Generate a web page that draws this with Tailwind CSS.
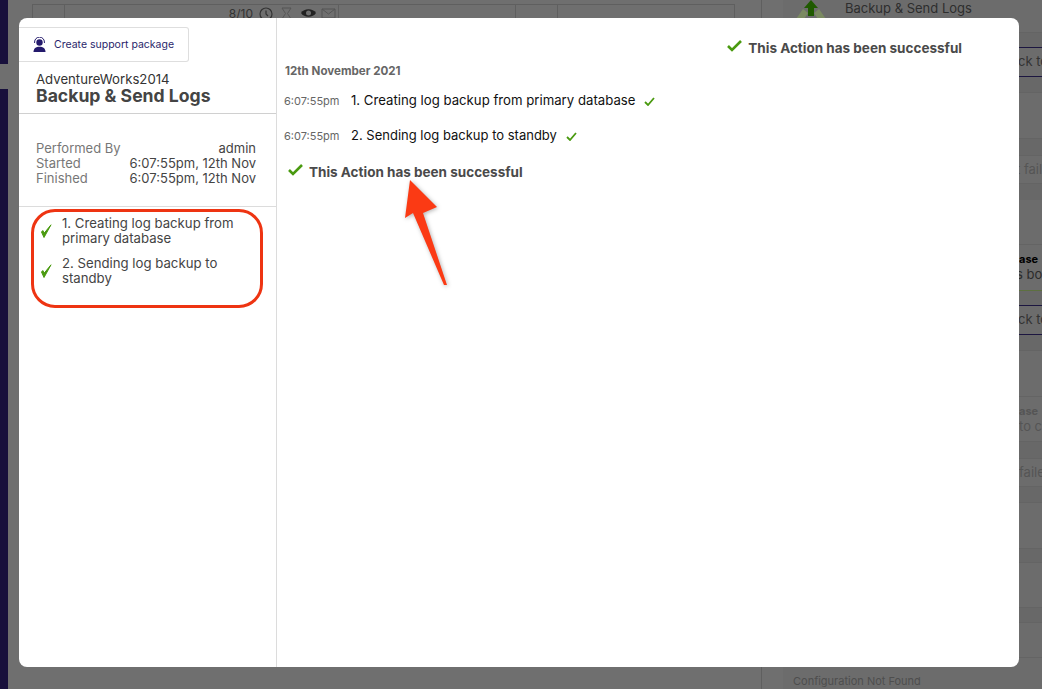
<!DOCTYPE html>
<html>
<head>
<meta charset="utf-8">
<script src="https://cdn.jsdelivr.net/npm/@tailwindcss/browser@4"></script>
</head>
<body class="m-0">
<div class="relative w-[1042px] h-[689px] overflow-hidden bg-[#6f6f6f] font-['Inter','Noto_Sans',sans-serif]">

  <!-- dimmed page behind the dialog -->
  <div class="absolute inset-0 flex">
    <div class="w-2 h-full flex flex-col shrink-0">
      <div class="h-[64px] bg-[#18103c]"></div>
      <div class="h-[25px] bg-[#6f6f6f]"></div>
      <div class="flex-1 bg-[#18103c]"></div>
    </div>
    <div class="w-[24px] shrink-0"></div>
    <div class="w-[703px] h-[18px] shrink-0 mt-[4px] border border-b-0 border-[#5f5f5f] flex text-[#333] text-[12px]">
      <div class="w-[32px] border-r border-[#5f5f5f]"></div>
      <div class="w-[274px] border-r border-[#5f5f5f] flex justify-end items-start gap-[6px] pr-[2px] pt-[2px]">
        <span class="leading-[14px]">8/10</span>
        <svg class="w-[14px] h-[14px]" viewBox="0 0 14 14" fill="none" stroke="#333" stroke-width="1.2"><circle cx="7" cy="7" r="6"/><path d="M7 3.5V7l2 2"/></svg>
        <svg class="w-[13px] h-[13px] ml-[1px]" viewBox="0 0 13 13" fill="none" stroke="#555" stroke-width="1"><path d="M2 1h9L7.5 6.5 11 12H2l3.5-5.5z"/></svg>
        <svg class="w-[17px] h-[12px] ml-[1px]" viewBox="0 0 17 12" fill="#222"><path d="M1 6c3-5 12-5 15 0-3 5-12 5-15 0z"/><circle cx="8.5" cy="6" r="2.5" fill="#6f6f6f"/></svg>
        <svg class="w-[15px] h-[12px] -ml-[2px]" viewBox="0 0 15 12" fill="none" stroke="#555" stroke-width="1"><path d="M1 2h13v9H1zM1 2l6.5 5L14 2"/></svg>
      </div>
      <div class="w-[177px] border-r border-[#5f5f5f]"></div>
      <div class="w-[42px] border-r border-[#5f5f5f]"></div>
    </div>
    <div class="w-[26px] shrink-0"></div>
    <div class="w-[22px] shrink-0 border-l border-[#5f5f5f]"></div>
    <div class="flex-1 flex flex-col bg-[#6c6c6c] text-[#333] text-[13px] overflow-hidden">
      <div class="h-[32px] flex items-start">
        <svg class="w-[32px] h-[22px] ml-[12px] shrink-0" viewBox="0 0 32 22"><path d="M1 19l7-10 5 4-4 6z M31 19l-7-10-5 4 4 6z" fill="#7b8a62"/><path d="M16 0l7 8h-4v8h-6V8H9z" fill="#1f5a00"/></svg>
        <span class="ml-[18px] text-[13px] leading-[17px] whitespace-nowrap text-[#2e2e2e]">Backup &amp; Send Logs</span>
      </div>
      <div class="h-[15px] bg-[#686868] border-t border-[#646464]"></div>
      <div class="h-[30px] border-y border-[#1c1640] flex items-center pl-[235px] whitespace-nowrap">ck to</div>
      <div class="h-[15px] bg-[#686868]"></div>
      <div class="h-[47px] border-y border-[#646464]"></div>
      <div class="h-[16px] bg-[#686868]"></div>
      <div class="h-[29px] border-y border-[#646464] flex items-center pl-[233px] text-[#555] whitespace-nowrap">t fail</div>
      <div class="h-[16px] bg-[#686868]"></div>
      <div class="h-[45px] border-b border-[#646464]"></div>
      <div class="h-[45px] flex flex-col pl-[236px] pt-[7px] leading-[15px] whitespace-nowrap"><b class="text-[11px] text-black">ase</b><span class="text-[#2b2b2b] -ml-[3px]">s bo</span></div>
      <div class="h-[15px] bg-[#686868] border-t border-[#5d7040]"></div>
      <div class="h-[30px] border-y border-[#1c1640] flex items-center pl-[235px] whitespace-nowrap">ck to</div>
      <div class="h-[15px] bg-[#686868]"></div>
      <div class="h-[47px] border-y border-[#646464]"></div>
      <div class="h-[44px] flex flex-col pl-[236px] pt-[7px] leading-[15px] text-[#555] whitespace-nowrap"><b class="text-[11px]">ase</b><span>to c</span></div>
      <div class="h-[17px] bg-[#686868] border-t border-[#646464]"></div>
      <div class="h-[29px] border-y border-[#646464] flex items-center pl-[236px] text-[#555] whitespace-nowrap">faile</div>
      <div class="h-[15px] bg-[#686868]"></div>
      <div class="h-[47px] border-y border-[#646464]"></div>
      <div class="h-[13px] bg-[#686868]"></div>
      <div class="h-[46px] border-y border-[#646464]"></div>
      <div class="h-[14px] bg-[#686868]"></div>
      <div class="h-[36px] border-y border-[#646464]"></div>
      <div class="flex-1 pl-[10px] pt-[16px] text-[11px] leading-[14px] text-[#4e4e4e] whitespace-nowrap">Configuration Not Found</div>
    </div>
  </div>

  <!-- dialog -->
  <div class="absolute left-[19px] top-[18px] w-[1000px] h-[649px] bg-white rounded-[8px] flex overflow-hidden">
    <aside class="w-[258px] shrink-0 h-full border-r border-[#dcdcdc] flex flex-col">
      <button class="mt-[9px] w-[170px] h-[35px] bg-white border border-l-0 border-[#dedede] rounded-r-[3px] flex items-center pl-[13px] gap-[7px] text-[#2a1f6b] text-[10.5px] whitespace-nowrap">
        <svg class="w-[15px] h-[15px] shrink-0" viewBox="0 0 15 15" fill="#241a6c"><circle cx="7.5" cy="5.5" r="3.2"/><path d="M2.6 6V5a4.9 4.9 0 0 1 9.8 0v1" fill="none" stroke="#241a6c" stroke-width="1"/><path d="M1.5 15c0-3.5 2.4-5.2 6-5.2s6 1.7 6 5.2z"/></svg>
        Create support package
      </button>
      <div class="h-[52px] border-b border-[#d0d0d0] pl-[17px] pt-[9px]">
        <div class="text-[13.2px] leading-[16px] text-[#333]">AdventureWorks2014</div>
        <div class="text-[17.6px] leading-[18px] font-bold text-[#444]">Backup &amp; Send Logs</div>
      </div>
      <dl class="h-[93px] border-b border-[#dcdcdc] pl-[17px] pr-[20px] pt-[27px] text-[13px] leading-[15px] text-[#777]">
        <div class="flex justify-between"><dt>Performed By</dt><dd class="text-[#444]">admin</dd></div>
        <div class="flex justify-between"><dt>Started</dt><dd class="text-[#444]">6:07:55pm, 12th Nov</dd></div>
        <div class="flex justify-between"><dt>Finished</dt><dd class="text-[#444]">6:07:55pm, 12th Nov</dd></div>
      </dl>
      <ol class="pt-[9px] pl-[21px] pr-[20px] text-[13.2px] leading-[15px] text-[#444] flex flex-col gap-[10px]">
        <li class="flex items-center gap-[10px]">
          <svg class="w-[12px] h-[14px] shrink-0" viewBox="0 0 12 14"><path d="M1.5 8l2.5 5.5L11 .8 4.3 9 2.8 6.5z" fill="#4a9a10" stroke="#4a9a10" stroke-width="1"/></svg>
          <span>1. Creating log backup from primary database</span>
        </li>
        <li class="flex items-center gap-[10px]">
          <svg class="w-[12px] h-[14px] shrink-0" viewBox="0 0 12 14"><path d="M1.5 8l2.5 5.5L11 .8 4.3 9 2.8 6.5z" fill="#4a9a10" stroke="#4a9a10" stroke-width="1"/></svg>
          <span>2. Sending log backup to standby</span>
        </li>
      </ol>
    </aside>
    <main class="flex-1 flex flex-col pl-[8px]">
      <div class="h-[30px] mt-[20px] flex items-start justify-end pr-[57px]">
        <div class="flex items-center gap-[6px] h-[20px]">
          <svg class="w-[15px] h-[13px] -mt-[5px]" viewBox="0 0 15 13" fill="none" stroke="#4a9a10" stroke-width="2.6"><path d="M1 7l4 4 9-9"/></svg>
          <span class="text-[13.5px] font-bold text-[#4a4a4a]">This Action has been successful</span>
        </div>
      </div>
      <div class="mt-[-4px] text-[11.6px] leading-[14px] font-bold text-[#666]">12th November 2021</div>
      <div class="mt-[13px] flex items-center h-[20px]">
        <span class="w-[67px] text-[11px] text-[#666] -ml-[1px] shrink-0">6:07:55pm</span>
        <span class="text-[13.2px] text-[#111]">1. Creating log backup from primary database</span>
        <svg class="w-[11px] h-[9px] ml-[9px]" viewBox="0 0 11 9" fill="none" stroke="#4a9a10" stroke-width="1.8"><path d="M1 5l3 3 6-7"/></svg>
      </div>
      <div class="mt-[15px] flex items-center h-[20px]">
        <span class="w-[67px] text-[11px] text-[#666] -ml-[1px] shrink-0">6:07:55pm</span>
        <span class="text-[13px] text-[#111]">2. Sending log backup to standby</span>
        <svg class="w-[11px] h-[9px] ml-[9px]" viewBox="0 0 11 9" fill="none" stroke="#4a9a10" stroke-width="1.8"><path d="M1 5l3 3 6-7"/></svg>
      </div>
      <div class="mt-[16px] flex items-center gap-[6px] h-[20px] pl-[3px]">
        <svg class="w-[15px] h-[13px] -mt-[5px]" viewBox="0 0 15 13" fill="none" stroke="#4a9a10" stroke-width="2.6"><path d="M1 7l4 4 9-9"/></svg>
        <span class="text-[13.5px] font-bold text-[#4a4a4a]">This Action has been successful</span>
      </div>
    </main>
  </div>

  <!-- annotations over the dialog -->
  <div class="absolute left-[31px] top-[209px] w-[232px] h-[99px] rounded-[24px] border-[3px] border-[#ee3412]"></div>
  <svg class="absolute left-[400px] top-[175px] w-[52px] h-[115px] drop-shadow-[1px_1px_2px_rgba(0,0,0,0.3)]" viewBox="0 0 52 115"><path d="M10 5 37 32 23 38 47 110 44 110 13 38 5 43z" fill="#fb3a14"/></svg>
</div>
</body>
</html>
